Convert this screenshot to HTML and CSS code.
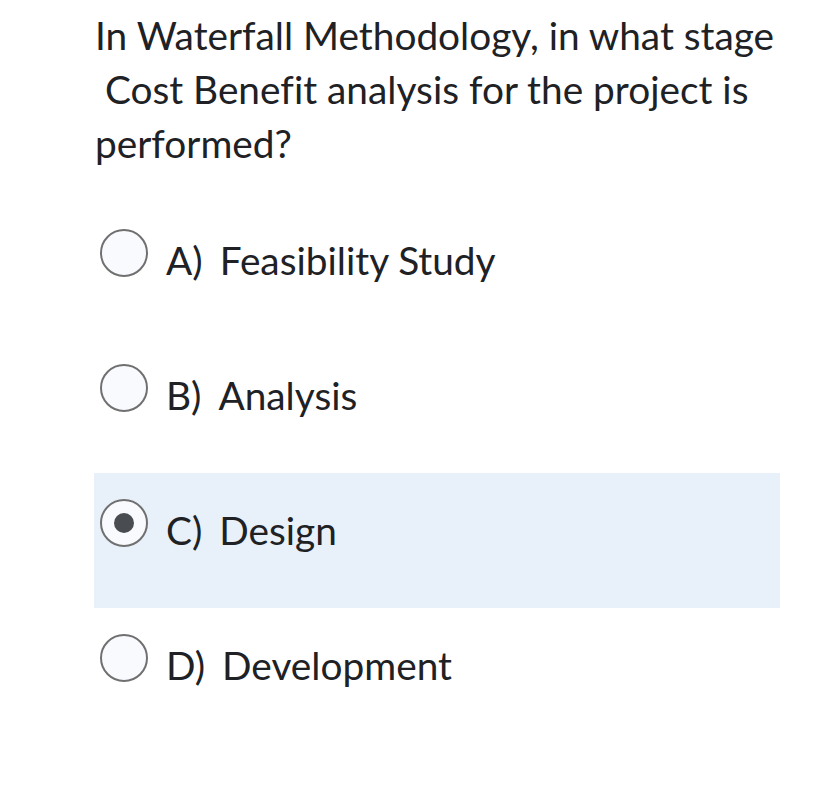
FILE: index.html
```html
<!DOCTYPE html>
<html>
<head>
<meta charset="utf-8">
<link rel="stylesheet" href="styles.css">
</head>
<body>
<div class="quiz">
  <div class="question">In Waterfall Methodology, in what stage<br>&nbsp;Cost Benefit analysis for the project is<br>performed?</div>
  <div class="options">
    <div class="option"><span class="radio"></span><span class="label"><span class="letter">A)</span>Feasibility Study</span></div>
    <div class="option"><span class="radio"></span><span class="label"><span class="letter">B)</span>Analysis</span></div>
    <div class="option selected"><span class="radio checked"></span><span class="label"><span class="letter">C)</span>Design</span></div>
    <div class="option"><span class="radio"></span><span class="label"><span class="letter">D)</span>Development</span></div>
  </div>
</div>
</body>
</html>
```
FILE: styles.css
```css
html, body {
  margin: 0;
  background: #ffffff;
}
body {
  padding-top: 8px;
  font-family: Lato, "Open Sans", sans-serif;
  color: #202124;
  font-variant-ligatures: none;
}
.quiz {
  padding-left: 94px;
}
.question {
  font-size: 38.8px;
  line-height: 54px;
  white-space: nowrap;
  padding-left: 1px;
}
.options {
  margin-top: 33px;
  width: 686px;
}
.option {
  display: flex;
  align-items: flex-start;
  height: 135px;
  box-sizing: border-box;
  padding: 26px 0 0 6px;
}
.option.selected {
  background: #e8f0fa;
}
.radio {
  flex: none;
  width: 48px;
  height: 48px;
  box-sizing: border-box;
  border: 2px solid #707070;
  border-radius: 50%;
  background: #f9fafe;
  display: flex;
  align-items: center;
  justify-content: center;
}
.radio.checked::after {
  content: "";
  width: 20px;
  height: 20px;
  border-radius: 50%;
  background: #494c50;
}
.label {
  margin-left: 18px;
  margin-top: 7px;
  font-size: 38.8px;
  line-height: 48px;
  white-space: nowrap;
}
.letter {
  display: inline-block;
  margin-right: 17px;
}
```
